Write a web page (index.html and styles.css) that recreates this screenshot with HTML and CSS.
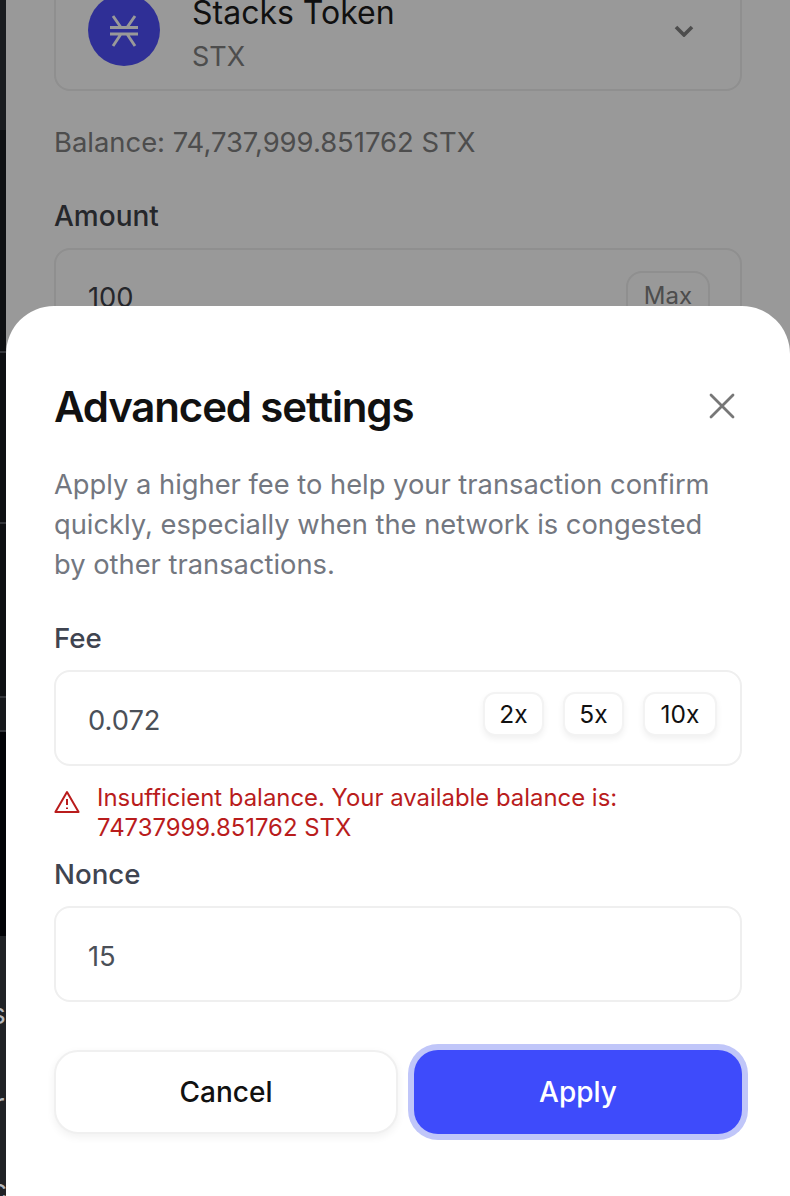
FILE: index.html
```html
<!DOCTYPE html>
<html lang="en">
<head>
<meta charset="utf-8">
<title>Advanced settings</title>
<link rel="stylesheet" href="styles.css">
</head>
<body>
<div class="app">
  <aside class="rail">
    <div class="seg seg-a"></div>
    <div class="seg seg-b"></div>
    <div class="seg seg-c"></div>
    <div class="seg seg-d"></div>
    <div class="seg seg-e"></div>
    <div class="seg seg-f"></div>
    <div class="seg seg-g">
      <span class="rail-s">s</span>
      <span class="rail-r">r</span>
      <span class="rail-o">c</span>
    </div>
  </aside>
  <main class="page">
    <div class="select-card">
      <svg class="token" width="72" height="72" viewBox="0 0 72 72" aria-hidden="true">
        <circle cx="36" cy="36" r="36" fill="#4f4ffa"/>
        <path d="M22 33.5H50M22 40H50M25 22L33 33.5M47 22L39 33.5M33 40L25 52M39 40L47 52" stroke="#fff" stroke-width="2.9" fill="none"/>
      </svg>
      <div class="token-text">
        <div class="token-name">Stacks Token</div>
        <div class="token-symbol">STX</div>
      </div>
      <svg class="chevron" width="20" height="12" viewBox="0 0 20 12" aria-hidden="true">
        <path d="M2 2L10 10L18 2" stroke="#808080" stroke-width="3.6" fill="none"/>
      </svg>
    </div>
    <p class="balance">Balance: 74,737,999.851762 STX</p>
    <div class="under-label">Amount</div>
    <div class="amount-card">
      <span class="amount-value">100</span>
      <span class="max">Max</span>
    </div>
  </main>
  <div class="scrim"></div>
  <section class="sheet">
    <header class="sheet-head">
      <h1 class="title">Advanced settings</h1>
      <svg class="close" width="26" height="26" viewBox="0 0 26 26" aria-hidden="true">
        <path d="M2 2L24 24M24 2L2 24" stroke="#777" stroke-width="2.8" stroke-linecap="round" fill="none"/>
      </svg>
    </header>
    <p class="desc">Apply a higher fee to help your transaction confirm quickly, especially when the network is congested by other transactions.</p>
    <div class="label label-fee">Fee</div>
    <div class="field">
      <span class="field-value">0.072</span>
      <div class="chips">
        <span class="chip">2x</span>
        <span class="chip">5x</span>
        <span class="chip chip-wide">10x</span>
      </div>
    </div>
    <div class="error">
      <svg class="warn" width="26" height="24" viewBox="0 0 26 24" aria-hidden="true">
        <path d="M13 2L24.6 22H1.4Z" stroke="#b91c1c" stroke-width="2" stroke-linejoin="round" fill="none"/>
        <path d="M13 9V15M13 17.6V19" stroke="#b91c1c" stroke-width="2" fill="none"/>
      </svg>
      <p class="error-text">Insufficient balance. Your available balance is: 74737999.851762 STX</p>
    </div>
    <div class="label label-nonce">Nonce</div>
    <div class="field">
      <span class="field-value">15</span>
    </div>
    <div class="actions">
      <button class="btn btn-cancel" type="button">Cancel</button>
      <button class="btn btn-apply" type="button">Apply</button>
    </div>
  </section>
</div>
</body>
</html>
```

FILE: styles.css
```css
* { box-sizing: border-box; }
html, body { margin: 0; height: 100%; }
body {
  width: 790px;
  height: 1196px;
  overflow: hidden;
  background: #fff;
  font-family: Inter, "Liberation Sans", sans-serif;
}
.app {
  position: relative;
  display: flex;
  width: 790px;
  height: 1196px;
  overflow: hidden;
}

/* Left edge of the window behind */
.rail {
  position: relative;
  z-index: 3;
  flex: 0 0 6px;
  width: 6px;
  display: flex;
  flex-direction: column;
  overflow: hidden;
}
.seg { border-bottom: 2px solid #33353a; }
.seg-a { height: 130px; background: #1a1c20; border-bottom: 0; }
.seg-b { height: 223px; background: #0e1013; }
.seg-c { height: 171px; background: #0e1013; }
.seg-d { height: 174px; background: #0e1013; }
.seg-e { height: 34px; background: #16181c; }
.seg-f { height: 204px; background: #020307; border-bottom: 0; }
.seg-g {
  position: relative;
  flex: 1;
  background: #202226;
  border-bottom: 0;
  color: #b5b8bd;
  font-size: 28px;
}
.rail-s, .rail-r, .rail-o { position: absolute; left: -9px; line-height: 1; }
.rail-s { top: 64px; }
.rail-r { top: 154px; left: -6px; }
.rail-o { top: 240px; left: -9px; }

/* Page behind the sheet */
.page {
  flex: 1;
  padding: 0 48px;
  background: #fff;
  min-width: 0;
}
.select-card {
  display: flex;
  align-items: center;
  gap: 32px;
  height: 122px;
  margin-top: -31px;
  padding: 0 46px 0 32px;
  border: 2px solid #eee;
  border-radius: 16px;
}
.token { flex: 0 0 72px; }
.chevron { margin-top: 2px; }
.token-text { flex: 1; margin-top: 9px; }
.token-name { font-size: 32px; line-height: 36px; color: #1c1c1c; }
.token-symbol { font-size: 27px; line-height: 36px; color: #808080; margin-top: 8px; }
.balance {
  margin: 31px 0 0;
  font-size: 27.4px;
  line-height: 40px;
  color: #808080;
}
.under-label {
  margin-top: 34px;
  font-size: 28px;
  line-height: 40px;
  font-weight: 500;
  color: #3f4149;
}
.amount-card {
  display: flex;
  justify-content: space-between;
  height: 94px;
  margin-top: 12px;
  padding: 21px 30px 0 32px;
  border: 2px solid #eee;
  border-radius: 16px;
}
.amount-value { margin-top: 1px; font-size: 27.3px; line-height: 52px; color: #3f4149; }
.max {
  height: 50px;
  padding: 0 16px;
  border: 2px solid #eee;
  border-radius: 16px;
  font-size: 24px;
  line-height: 46px;
  color: #808080;
}

/* Dim layer and bottom sheet */
.scrim {
  position: absolute;
  inset: 0 0 0 6px;
  background: rgba(0, 0, 0, .4);
}
.sheet {
  position: absolute;
  z-index: 2;
  left: 6px;
  right: 0;
  top: 306px;
  bottom: 0;
  padding: 72px 48px 0;
  background: #fff;
  border-radius: 48px 48px 0 0;
}
.sheet-head {
  display: flex;
  align-items: center;
  justify-content: space-between;
  padding-right: 7px;
  height: 58px;
}
.title {
  margin: 0;
  font-size: 42px;
  line-height: 58px;
  font-weight: 600;
  letter-spacing: -1.15px;
  color: #111;
}
.close { flex: 0 0 26px; margin-top: -3px; }
.desc {
  margin: 29px 0 0;
  width: 676px;
  font-size: 27.3px;
  line-height: 40px;
  color: #737780;
}
.label {
  font-size: 27.7px;
  line-height: 40px;
  font-weight: 500;
  color: #3f4450;
}
.label-fee { margin-top: 33px; }
.label-nonce { margin-top: 11px; }
.field {
  display: flex;
  align-items: center;
  justify-content: space-between;
  width: 688px;
  height: 96px;
  margin-top: 12px;
  padding: 0 23px 0 32px;
  border: 2px solid #efefef;
  border-radius: 16px;
}
.field-value { margin-top: 4px; font-size: 27.3px; color: #4b5058; }
.chips { display: flex; gap: 19px; margin-top: -8px; }
.chip {
  width: 61px;
  height: 44px;
  border: 2px solid #f3f3f3;
  border-radius: 12px;
  background: #fff;
  box-shadow: 0 3px 6px rgba(0, 0, 0, .06);
  font-size: 24.5px;
  line-height: 40px;
  text-align: center;
  color: #111;
}
.chip-wide { width: 74px; }
.error {
  display: flex;
  gap: 17px;
  margin-top: 17px;
}
.warn { flex: 0 0 26px; margin-top: 7px; }
.error-text {
  margin: 0;
  width: 580px;
  font-size: 23.9px;
  line-height: 30px;
  color: #b91c1c;
}
.actions {
  display: flex;
  gap: 16px;
  margin-top: 48px;
}
.btn {
  height: 84px;
  border-radius: 24px;
  font-family: inherit;
  font-size: 28px;
  font-weight: 500;
}
.btn-cancel {
  width: 344px;
  background: #fff;
  border: 2px solid #f0f0f0;
  box-shadow: 0 3px 8px rgba(0, 0, 0, .06);
  color: #111;
}
.btn-apply {
  width: 328px;
  border: 0;
  background: #3e4bfb;
  box-shadow: 0 0 0 6px #c0c6f9;
  color: #fff;
}
```
